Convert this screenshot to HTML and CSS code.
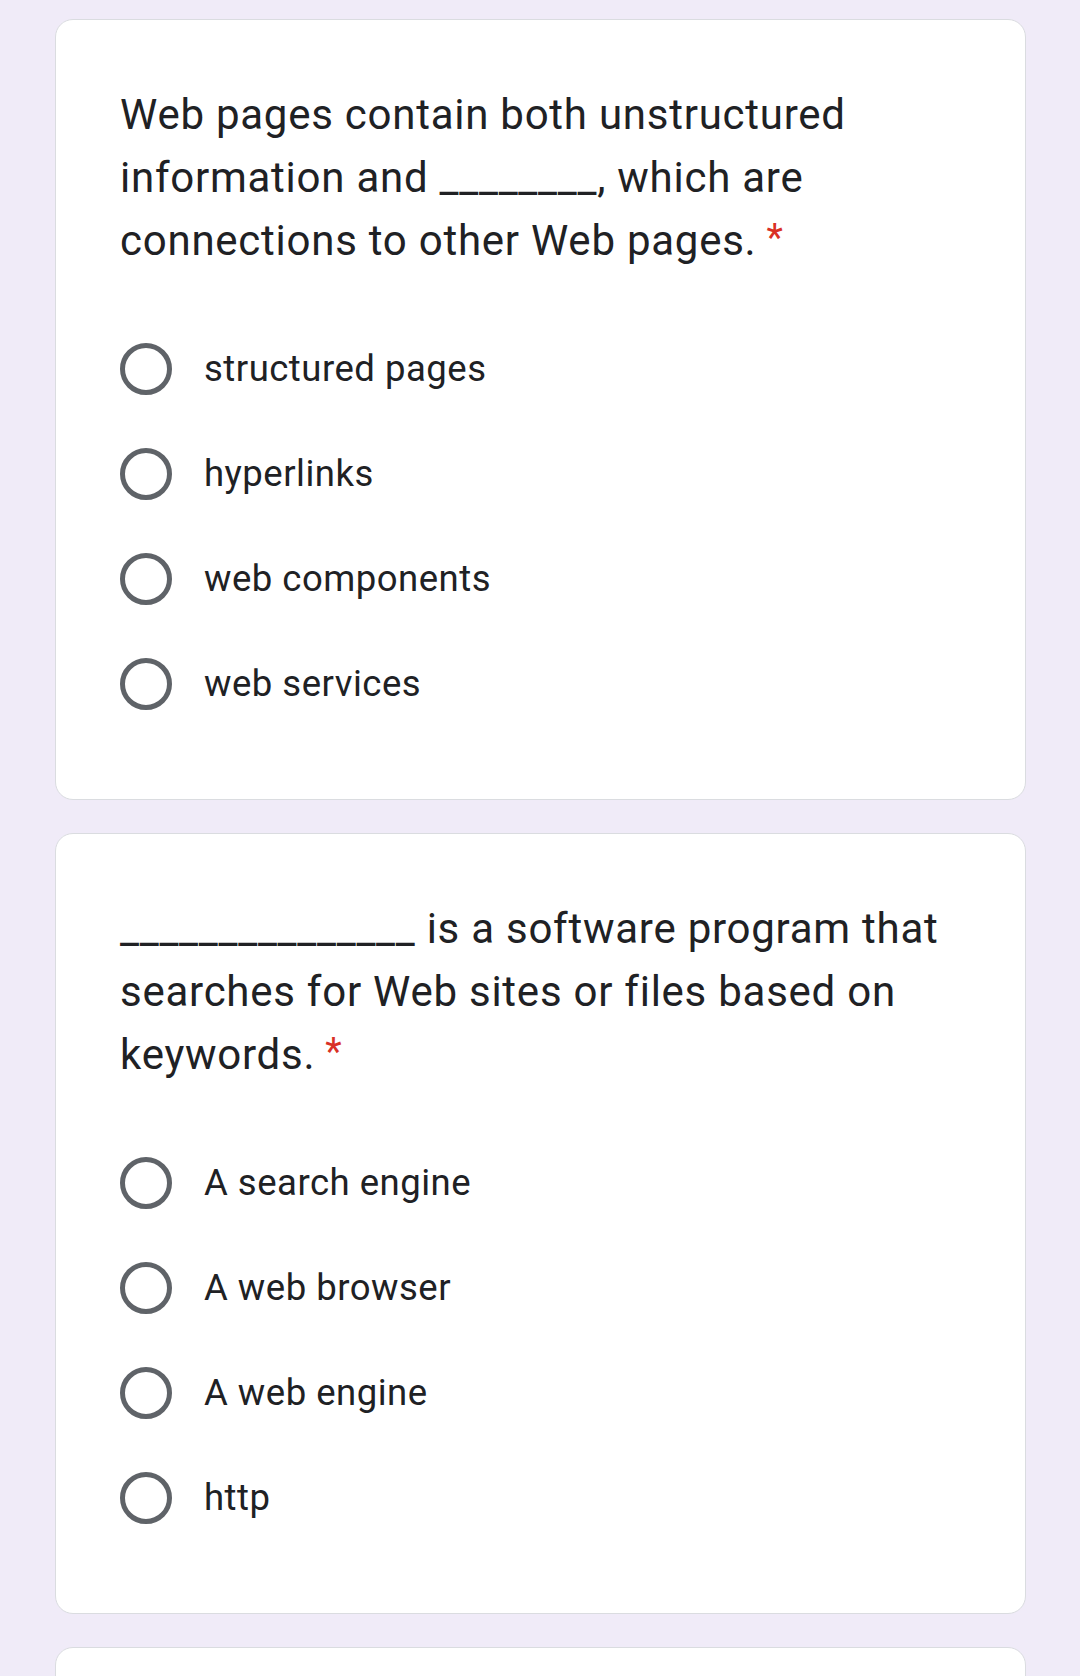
FILE: index.html
```html
<!DOCTYPE html>
<html lang="en">
<head>
    <meta charset="UTF-8">
    <meta name="viewport" content="width=device-width, initial-scale=1.0">
    <title>Quiz</title>
    <link rel="stylesheet" href="styles.css">
</head>
<body>
    <div class="form">
        <div class="question">
            <div class="question-title">
                Web pages contain both unstructured information and ________, which are connections to other Web pages.<span class="required">*</span>
            </div>
            <div class="options">
                <label class="option"><span class="radio"></span><span class="option-text">structured pages</span></label>
                <label class="option"><span class="radio"></span><span class="option-text">hyperlinks</span></label>
                <label class="option"><span class="radio"></span><span class="option-text">web components</span></label>
                <label class="option"><span class="radio"></span><span class="option-text">web services</span></label>
            </div>
        </div>

        <div class="question">
            <div class="question-title">
                _______________ is a software program that searches for Web sites or files based on keywords.<span class="required">*</span>
            </div>
            <div class="options">
                <label class="option"><span class="radio"></span><span class="option-text">A search engine</span></label>
                <label class="option"><span class="radio"></span><span class="option-text">A web browser</span></label>
                <label class="option"><span class="radio"></span><span class="option-text">A web engine</span></label>
                <label class="option"><span class="radio"></span><span class="option-text">http</span></label>
            </div>
        </div>

        <div class="question"></div>
    </div>
</body>
</html>
```

FILE: styles.css
```css
body {
    margin: 0;
    background: #f0ebf8;
    font-family: Roboto, "Liberation Sans", sans-serif;
    color: #202124;
}
.form {
    padding: 19px 54px 0 55px;
    display: flex;
    flex-direction: column;
    gap: 33px;
}
.question {
    background: #fff;
    border: 1px solid #dadce0;
    border-radius: 18px;
    padding: 63px 64px;
    min-height: 100px;
}
.question-title {
    font-size: 42px;
    line-height: 63px;
    letter-spacing: 0.75px;
}
.required {
    color: #d93025;
    margin-left: 10px;
    font-size: 38px;
    line-height: 30px;
    vertical-align: 4px;
}
.options {
    margin-top: 44px;
    display: flex;
    flex-direction: column;
}
.option {
    display: flex;
    align-items: center;
    height: 105px;
}
.radio {
    box-sizing: border-box;
    width: 52px;
    height: 52px;
    border: 5px solid #5f6368;
    border-radius: 50%;
    flex-shrink: 0;
}
.option-text {
    margin-left: 32px;
    font-size: 36.5px;
    letter-spacing: 0.5px;
}
```
